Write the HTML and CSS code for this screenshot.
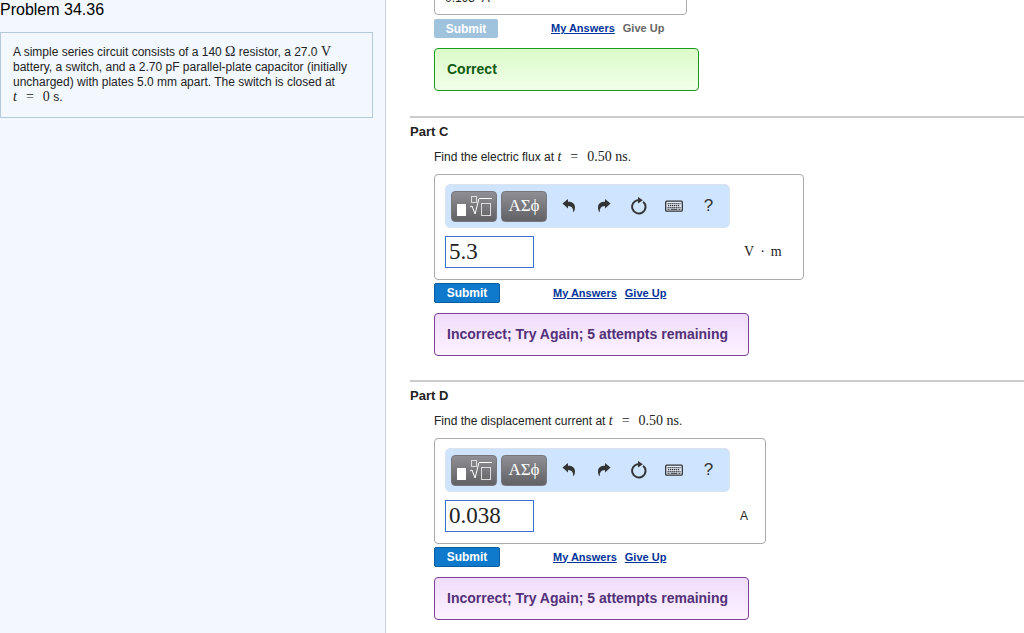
FILE: index.html
```html
<!DOCTYPE html>
<html lang="en">
  <head>
    <meta charset="UTF-8" />
    <title>Problem 34.36</title>
    <link rel="stylesheet" href="styles.css">
  </head>
  <body>
    <!-- Icons shared by both answer toolbars -->
    <svg class="sprite" aria-hidden="true">
      <symbol id="templates" viewBox="0 0 36 22">
        <rect x="1" y="9" width="9" height="12" fill="#fff" />
        <rect x="15.5" y="1.5" width="5" height="6" fill="none" stroke="#ddd" />
        <path d="M14 12l2-1 3 8 4-15.500h13" fill="none" stroke="#fff" />
        <rect x="25.500" y="8.500" width="9" height="12" fill="none" stroke="#ddd" />
      </symbol>
      <symbol id="undo" viewBox="0 0 14 16">
        <path d="M0.500 5.500L6 1v2.800c4.500 0 7 2 7 5.700 0 2-.6 3.700-1.800 5 .3-4-1.200-6.300-5.200-6.400V10.500z" fill="#333" />
      </symbol>
      <symbol id="redo" viewBox="0 0 14 16">
        <path d="M13.500 5.500L8 1v2.800c-4.500 0-7 2-7 5.700 0 2 .6 3.700 1.800 5-.3-4 1.200-6.300 5.200-6.400V10.500z" fill="#333" />
      </symbol>
      <symbol id="reset" viewBox="0 0 18 18">
        <path d="M13.200 4.700a6.700 6.700 0 1 1-4.700-1.600" fill="none" stroke="#333" stroke-width="1.900" />
        <path d="M8 0l4.800 3.200-4.800 3.300z" fill="#333" />
      </symbol>
      <symbol id="keyboard" viewBox="0 0 18 12">
        <rect x="0.700" y="1.200" width="16.600" height="10" rx="1" fill="#e5f0fb" stroke="#333" stroke-width="1.300" />
        <path d="M2.500 3.700h13M3 5.700h12M2.500 7.700h13" stroke="#333" stroke-width="1.200" stroke-dasharray="1.300 0.700" />
        <path d="M2.500 9.300h2M5.500 9.300h7M13.500 9.300h2" stroke="#333" />
      </symbol>
    </svg>

    <div class="page">
      <aside class="sidebar">
        <h1>Problem 34.36</h1>
        <p class="problem">
          A simple series circuit consists of a 140 <span class="math">Ω</span> resistor, a 27.0 <span class="math">V</span><br>
          battery, a switch, and a 2.70 pF parallel-plate capacitor (initially<br>
          uncharged) with plates 5.0 mm apart. The switch is closed at<br>
          <span class="math"><i>t</i><span class="eq">=</span>0</span> s.
        </p>
      </aside>

      <main class="parts">
        <!-- Part B -->
        <section class="part part-top">
          <div class="content">
            <div class="old-answer">0.193 &nbsp;A</div>
            <div class="actions">
              <button class="submit" disabled>Submit</button>
              <a href="#">My Answers</a>
              <span class="off">Give Up</span>
            </div>
            <div class="feedback correct">Correct</div>
          </div>
        </section>

        <!-- Part C -->
        <section class="part">
          <h2>Part C</h2>
          <div class="content">
            <label class="question" for="answerC">Find the electric flux at <span class="math"><i>t</i><span class="eq">=</span>0.50 ns</span>.</label>
            <div class="answer">
              <div class="toolbar">
                <button class="key" aria-label="Templates"><svg width="36" height="22"><use href="#templates" /></svg></button>
                <button class="key">ΑΣϕ</button>
                <div class="tools">
                  <button aria-label="Undo"><svg width="14" height="16"><use href="#undo" /></svg></button>
                  <button aria-label="Redo"><svg width="14" height="16"><use href="#redo" /></svg></button>
                  <button aria-label="Reset"><svg width="18" height="18"><use href="#reset" /></svg></button>
                  <button aria-label="Keyboard"><svg width="18" height="12"><use href="#keyboard" /></svg></button>
                  <button>?</button>
                </div>
              </div>
              <input type="text" id="answerC" value="5.3" />
              <span class="unit math">V<span class="dot">·</span>m</span>
            </div>
            <div class="actions">
              <button class="submit">Submit</button>
              <a href="#">My Answers</a>
              <a href="#">Give Up</a>
            </div>
            <div class="feedback incorrect">Incorrect; Try Again; 5 attempts remaining</div>
          </div>
        </section>

        <!-- Part D -->
        <section class="part">
          <h2>Part D</h2>
          <div class="content">
            <label class="question" for="answerD">Find the displacement current at <span class="math"><i>t</i><span class="eq">=</span>0.50 ns</span>.</label>
            <div class="answer">
              <div class="toolbar">
                <button class="key" aria-label="Templates"><svg width="36" height="22"><use href="#templates" /></svg></button>
                <button class="key">ΑΣϕ</button>
                <div class="tools">
                  <button aria-label="Undo"><svg width="14" height="16"><use href="#undo" /></svg></button>
                  <button aria-label="Redo"><svg width="14" height="16"><use href="#redo" /></svg></button>
                  <button aria-label="Reset"><svg width="18" height="18"><use href="#reset" /></svg></button>
                  <button aria-label="Keyboard"><svg width="18" height="12"><use href="#keyboard" /></svg></button>
                  <button>?</button>
                </div>
              </div>
              <input type="text" id="answerD" value="0.038" />
              <span class="unit">A</span>
            </div>
            <div class="actions">
              <button class="submit">Submit</button>
              <a href="#">My Answers</a>
              <a href="#">Give Up</a>
            </div>
            <div class="feedback incorrect">Incorrect; Try Again; 5 attempts remaining</div>
          </div>
        </section>
      </main>
    </div>
  </body>
</html>
```
FILE: styles.css
```css
* {
  box-sizing: border-box;
}
body {
  margin: 0;
  font-family: "Liberation Sans", Arial, sans-serif;
  font-size: 12px;
  line-height: 15px;
  color: #222;
  background-color: #fff;
  overflow: hidden;
}
button {
  font-family: inherit;
  padding: 0;
  cursor: pointer;
}
.sprite {
  display: none;
}
.page {
  display: flex;
  min-height: 100vh;
}
.math {
  font-family: "Liberation Serif", "Times New Roman", serif;
  font-size: 14px;
  line-height: 14px;
}
.eq {
  margin: 0 9px;
}
.dot {
  margin: 0 6px;
}

/* Left column */
.sidebar {
  flex: 0 0 386px;
  padding-right: 12px;
  background-color: #f3f8fe;
  border-right: 1px solid #c3d3e3;
}
h1 {
  margin: 0;
  padding-bottom: 12px;
  font-size: 16px;
  font-weight: normal;
  line-height: 20px;
  color: #000;
}
.problem {
  margin: 0;
  padding: 12px;
  border: 1px solid #b5c9dc;
}

/* Right column */
.parts {
  flex: 1;
  padding-left: 24px;
}
.part {
  padding: 6px 0 24px;
  border-top: 2px solid #ccc;
}
.part-top {
  margin-top: -32px;
  padding-top: 0;
  padding-bottom: 25px;
  border-top: none;
}
h2 {
  margin: 0;
  font-size: 13px;
  line-height: 16px;
}
.content {
  padding-left: 24px;
}
.question {
  display: block;
  padding: 9px 0;
  line-height: 16px;
}
.old-answer {
  width: 253px;
  height: 47px;
  margin-bottom: 4px;
  padding: 22px 10px 0;
  border: 1px solid #aaa;
  border-radius: 4px;
}
.answer {
  display: inline-grid;
  grid-template-columns: 285px auto;
  column-gap: 10px;
  row-gap: 8px;
  align-items: center;
  margin-bottom: 3px;
  padding: 9px 17px 11px 10px;
  border: 1px solid #aaa;
  border-radius: 4px;
  vertical-align: top;
}
.toolbar {
  display: flex;
  align-items: center;
  gap: 4px;
  grid-column: 1;
  height: 44px;
  padding-left: 5px;
  background-color: #cfe5ff;
  border: 1px solid #dce3ea;
  border-radius: 5px;
}
.key {
  display: flex;
  align-items: center;
  justify-content: center;
  width: 46px;
  height: 31px;
  font-family: "Liberation Serif", "Times New Roman", serif;
  font-size: 17px;
  color: #fff;
  background: linear-gradient(#8e8e94, #626265);
  border: 1px solid #77777c;
  border-radius: 4px;
}
.tools {
  display: flex;
}
.tools button {
  display: flex;
  align-items: center;
  justify-content: center;
  width: 35px;
  height: 31px;
  font-size: 17px;
  color: #333;
  background: none;
  border: none;
}
.answer input {
  grid-column: 1;
  width: 89px;
  height: 32px;
  padding: 0 3px;
  font-family: "Liberation Serif", "Times New Roman", serif;
  font-size: 23px;
  color: #222;
  border: 1px solid #3b6fd4;
}
.unit {
  grid-column: 2;
}
.unit.math {
  padding: 0 4px;
}
.actions {
  display: flex;
  align-items: center;
  gap: 8px;
  height: 20px;
  margin-bottom: 10px;
  font-size: 11px;
  font-weight: bold;
}
.actions a {
  color: #003399;
}
.off {
  color: #666;
}
.submit {
  width: 66px;
  height: 20px;
  margin-right: 45px;
  font-size: 12px;
  font-weight: bold;
  color: #fff;
  background-color: #0f7acc;
  border: 1px solid #0a5c9e;
  border-radius: 2px;
}
.submit:disabled {
  width: 64px;
  height: 19px;
  background-color: #9fc2dd;
  border-color: #9fc2dd;
}
.part-top .actions {
  height: 19px;
}
.feedback {
  width: fit-content;
  min-width: 265px;
  padding: 13px 12px;
  font-size: 14px;
  font-weight: bold;
  border: 1px solid;
  border-radius: 4px;
}
.correct {
  color: #0f5a0f;
  background: linear-gradient(#dcfbc8, #f1ffea);
  border-color: #1c9a1c;
}
.incorrect {
  min-width: 315px;
  color: #533178;
  background: linear-gradient(#f0dcfc, #fdf2ff);
  border-color: #7b3f98;
}
```
